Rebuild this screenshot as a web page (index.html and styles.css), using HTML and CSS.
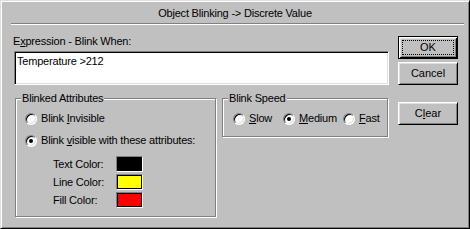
FILE: index.html
```html
<!DOCTYPE html>
<html lang="en">
<head>
    <meta charset="UTF-8">
    <title>Object Blinking -&gt; Discrete Value</title>
    <link rel="stylesheet" href="styles.css">
</head>
<body>
    <div class="dialog">
        <div class="caption">Object Blinking -&gt; Discrete Value</div>
        <div class="caption-rule"></div>

        <div class="content">
            <div class="main">
                <div class="field-label">E<u>x</u>pression - Blink When:</div>
                <div class="textbox">Temperature &gt;212</div>

                <div class="groups">
                    <fieldset class="group group-attrs">
                        <legend>Blinked Attributes</legend>
                        <div class="option attr-option"><span class="radio"></span><span>Blink <u>I</u>nvisible</span></div>
                        <div class="option attr-option second"><span class="radio checked"></span><span>Blink <u>v</u>isible with these attributes:</span></div>
                        <div class="colors">
                            <div class="color-row"><span class="color-label">Text Color:</span><span class="swatch swatch-black"></span></div>
                            <div class="color-row"><span class="color-label">Line Color:</span><span class="swatch swatch-yellow"></span></div>
                            <div class="color-row"><span class="color-label">Fill Color:</span><span class="swatch swatch-red"></span></div>
                        </div>
                    </fieldset>

                    <fieldset class="group group-speed">
                        <legend>Blink Speed</legend>
                        <div class="speed-row">
                            <div class="option speed-slow"><span class="radio"></span><span><u>S</u>low</span></div>
                            <div class="option speed-medium"><span class="radio checked"></span><span><u>M</u>edium</span></div>
                            <div class="option"><span class="radio"></span><span><u>F</u>ast</span></div>
                        </div>
                    </fieldset>
                </div>
            </div>

            <div class="buttons">
                <button class="btn btn-default">OK</button>
                <button class="btn btn-cancel">Cancel</button>
                <button class="btn btn-clear">C<u>l</u>ear</button>
            </div>
        </div>
    </div>
</body>
</html>
```

FILE: styles.css
```css
:root {
    --face: #c0c0c0;
    --light: #dfdfdf;
    --shadow: #808080;
    --dark: #000;
    --white: #fff;
}

body {
    margin: 0;
    background-color: var(--face);
    font-family: 'Liberation Sans', Arial, sans-serif;
    font-size: 11px;
    line-height: 13px;
    letter-spacing: -0.2px;
    color: #000;
}

.dialog {
    width: 470px;
    height: 229px;
    box-sizing: border-box;
    border: 1px solid;
    border-color: var(--light) var(--dark) var(--dark) var(--light);
    box-shadow: inset 1px 1px var(--white), inset -1px -1px var(--shadow);
}

.caption {
    padding-top: 6px;
    text-align: center;
}

.caption-rule {
    margin: 3px 5px 0 10px;
    border-top: 1px solid var(--shadow);
    border-bottom: 1px solid var(--white);
}

.content {
    display: flex;
    padding: 10px 10px 0 12px;
}

.main {
    width: 376px;
}

.textbox {
    width: 375px;
    height: 34px;
    box-sizing: border-box;
    margin: 3px 0 0 1px;
    padding: 3px 2px;
    background-color: var(--white);
    border: 1px solid;
    border-color: var(--shadow) var(--white) var(--white) var(--shadow);
    box-shadow: inset 1px 1px var(--dark), inset -1px -1px var(--light);
}

.groups {
    display: flex;
    align-items: flex-start;
    margin-top: 7px;
}

.group {
    margin: 0;
    padding: 7px 0 0 0;
    min-width: 0;
    box-sizing: border-box;
    border: 1px solid var(--shadow);
    box-shadow: inset 1px 1px var(--white), 1px 1px var(--white);
}

.group legend {
    margin-left: 5px;
    padding: 0 1px;
    background-color: var(--face);
}

.group-attrs {
    width: 201px;
    margin-left: 2px;
    padding-bottom: 8px;
}

.group-speed {
    width: 166px;
    margin-left: 6px;
    padding-bottom: 11px;
}

.option {
    display: flex;
    align-items: center;
    gap: 4px;
    height: 13px;
    white-space: nowrap;
}

.attr-option {
    margin-left: 9px;
}

.attr-option.second {
    margin-top: 9px;
}

.radio {
    position: relative;
    width: 12px;
    height: 12px;
    box-sizing: border-box;
    flex-shrink: 0;
    border-radius: 50%;
    background-color: var(--white);
    border: 1px solid;
    border-color: var(--shadow) var(--white) var(--white) var(--shadow);
    box-shadow: inset 1px 1px var(--dark), inset -1px -1px var(--light);
}

.radio.checked::after {
    content: '';
    position: absolute;
    left: 3px;
    top: 3px;
    width: 4px;
    height: 4px;
    border-radius: 50%;
    background-color: var(--dark);
}

.colors {
    margin: 9px 0 0 37px;
}

.color-row {
    display: flex;
    align-items: center;
    height: 16px;
}

.color-row + .color-row {
    margin-top: 2px;
}

.color-label {
    width: 63px;
}

.swatch {
    width: 27px;
    height: 16px;
    box-sizing: border-box;
    border: 1px solid;
    border-color: var(--shadow) var(--white) var(--white) var(--shadow);
    box-shadow: inset 0 0 0 1px var(--dark);
}

.swatch-black { background-color: #000; }
.swatch-yellow { background-color: #ffff00; }
.swatch-red { background-color: #ff0000; }

.speed-row {
    display: flex;
    margin-left: 10px;
}

.speed-slow { width: 50px; }
.speed-medium { width: 60px; }

.buttons {
    display: flex;
    flex-direction: column;
    width: 60px;
    margin-left: 9px;
    padding-top: 1px;
}

.btn {
    height: 23px;
    margin: 0;
    padding: 0;
    font: inherit;
    color: #000;
    background-color: var(--face);
    border: 1px solid;
    border-color: var(--white) var(--dark) var(--dark) var(--white);
    box-shadow: inset 1px 1px var(--light), inset -1px -1px var(--shadow);
}

.btn-default {
    border-color: var(--dark);
    box-shadow: inset 1px 1px var(--white), inset -1px -1px var(--dark),
                inset 2px 2px var(--light), inset -2px -2px var(--shadow);
    outline: 1px dotted #000;
    outline-offset: -5px;
}

.btn-cancel {
    margin-top: 3px;
}

.btn-clear {
    margin-top: 17px;
}
```
